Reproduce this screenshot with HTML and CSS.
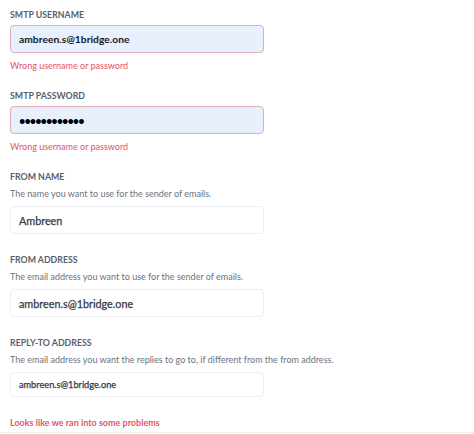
FILE: index.html
```html
<!DOCTYPE html>
<html>
<head>
<meta charset="utf-8">
<link rel="stylesheet" href="styles.css">
</head>
<body>
<form class="form">
  <div class="field with-error">
    <div class="label">SMTP USERNAME</div>
    <div class="input invalid">ambreen.s@1bridge.one</div>
    <div class="error">Wrong username or password</div>
  </div>
  <div class="field with-error">
    <div class="label">SMTP PASSWORD</div>
    <div class="input invalid dots">••••••••••••</div>
    <div class="error">Wrong username or password</div>
  </div>
  <div class="field">
    <div class="label">FROM NAME</div>
    <div class="desc">The name you want to use for the sender of emails.</div>
    <div class="input">Ambreen</div>
  </div>
  <div class="field">
    <div class="label">FROM ADDRESS</div>
    <div class="desc">The email address you want to use for the sender of emails.</div>
    <div class="input">ambreen.s@1bridge.one</div>
  </div>
  <div class="field">
    <div class="label">REPLY-TO ADDRESS</div>
    <div class="desc">The email address you want the replies to go to, if different from the from address.</div>
    <div class="input small">ambreen.s@1bridge.one</div>
  </div>
  <div class="problems">Looks like we ran into some problems</div>
  <div class="footer-line"></div>
</form>
</body>
</html>
```

FILE: styles.css
```css
html, body {
  margin: 0;
  padding: 0;
  background: #ffffff;
}
body {
  font-family: Lato, "Open Sans", sans-serif;
  width: 474px;
  height: 434px;
  overflow: hidden;
}
.form {
  display: flex;
  flex-direction: column;
  padding: 9px 0 0 10px;
}
.field {
  display: flex;
  flex-direction: column;
  margin-bottom: 20px;
}
.field.with-error {
  margin-bottom: 18px;
}
.label {
  font-size: 8.8px;
  font-weight: 700;
  color: #5a5f6c;
  line-height: 12px;
  margin-bottom: 4px;
}
.desc {
  font-size: 9px;
  color: #6d727d;
  line-height: 13px;
  margin-bottom: 6px;
}
.input {
  box-sizing: border-box;
  width: 254px;
  height: 28px;
  border: 1px solid #eceef1;
  border-radius: 4px;
  background: #ffffff;
  padding: 0 8px;
  display: flex;
  align-items: center;
  font-size: 10.8px;
  font-weight: 400;
  color: #343947;
  -webkit-text-stroke: 0.25px #343947;
}
.input.invalid {
  background: #e8f0fe;
  border-color: #e3abbb;
  color: #16181d;
  font-size: 10.3px;
  font-weight: 700;
  -webkit-text-stroke: 0;
}
.input.dots {
  font-size: 11px;
  letter-spacing: -1px;
  color: #000000;
}
.input.small {
  height: 25px;
  font-size: 9.2px;
}
.error {
  font-size: 9px;
  color: #e05466;
  line-height: 13px;
  margin-top: 6px;
}
.problems {
  font-size: 9px;
  font-weight: 700;
  color: #e4566a;
  margin-top: -1px;
  line-height: 14px;
}
.footer-line {
  height: 1px;
  background: #efefef;
  margin: 2px 0 0 -10px;
}
```
